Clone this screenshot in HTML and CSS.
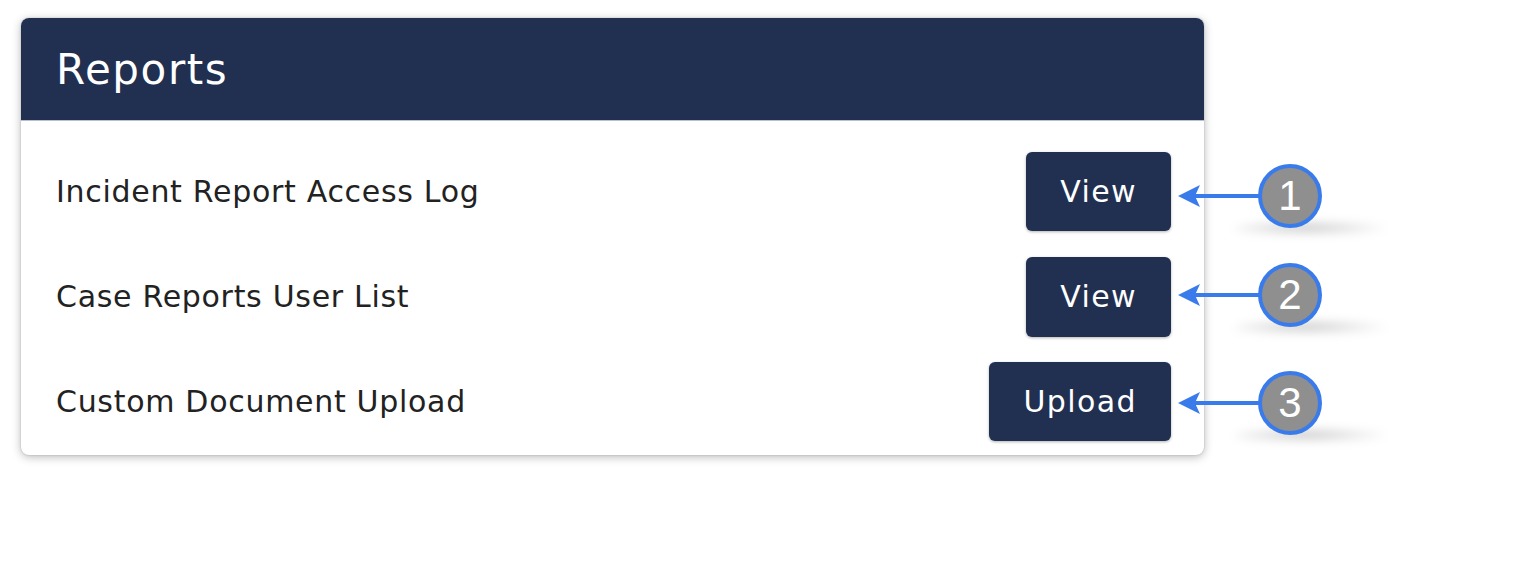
FILE: index.html
```html
<!DOCTYPE html>
<html>
<head>
<meta charset="utf-8">
<link rel="stylesheet" href="styles.css">
</head>
<body>
<div class="stage">
  <div class="card">
    <div class="card-head"><h1 class="title">Reports</h1></div>
    <div class="card-body">
      <div class="row"><span class="label">Incident Report Access Log</span><button class="btn">View</button></div>
      <div class="row"><span class="label">Case Reports User List</span><button class="btn">View</button></div>
      <div class="row"><span class="label">Custom Document Upload</span><button class="btn">Upload</button></div>
    </div>
  </div>

  <div class="callout c1">
    <svg class="arrow" width="84" height="26" viewBox="0 0 84 26"><path d="M0 13 L22 2 L17 13 L22 24 Z" fill="#3a7bec"/><rect x="14" y="11" width="70" height="4" fill="#3a7bec"/></svg>
    <div class="shadow"></div>
    <div class="badge">1</div>
  </div>
  <div class="callout c2">
    <svg class="arrow" width="84" height="26" viewBox="0 0 84 26"><path d="M0 13 L22 2 L17 13 L22 24 Z" fill="#3a7bec"/><rect x="14" y="11" width="70" height="4" fill="#3a7bec"/></svg>
    <div class="shadow"></div>
    <div class="badge">2</div>
  </div>
  <div class="callout c3">
    <svg class="arrow" width="84" height="26" viewBox="0 0 84 26"><path d="M0 13 L22 2 L17 13 L22 24 Z" fill="#3a7bec"/><rect x="14" y="11" width="70" height="4" fill="#3a7bec"/></svg>
    <div class="shadow"></div>
    <div class="badge">3</div>
  </div>
</div>
</body>
</html>
```

FILE: styles.css
```css
html, body {
  margin: 0;
  padding: 0;
  background: #ffffff;
}
.stage {
  position: relative;
  width: 1536px;
  height: 570px;
  padding: 18px 0 0 21px;
  box-sizing: border-box;
  font-family: "DejaVu Sans", "Noto Sans", sans-serif;
}
.card {
  width: 1183px;
  height: 437px;
  border-radius: 8px;
  background: #fff;
  box-shadow: 0 2px 10px rgba(0,0,0,0.28), 0 0 2px rgba(0,0,0,0.2);
  overflow: hidden;
  display: flex;
  flex-direction: column;
}
.card-head {
  height: 103px;
  background: #213051;
  display: flex;
  align-items: center;
  padding-left: 35px;
  border-bottom: 1px solid #b9bfcc;
  box-sizing: border-box;
}
.title {
  margin: 0;
  color: #fff;
  font-weight: 400;
  font-size: 42px;
  letter-spacing: 1.6px;
}
.card-body {
  display: flex;
  flex-direction: column;
  gap: 26px;
  padding: 31px 33px 13px 35px;
}
.row {
  display: flex;
  align-items: center;
  justify-content: space-between;
  height: 79px;
}
.label {
  font-size: 30px;
  color: #222;
  letter-spacing: 0.7px;
}
.btn {
  height: 79px;
  padding: 0 34px;
  border: none;
  border-radius: 6px;
  background: #213051;
  color: #fff;
  font-family: inherit;
  font-size: 30px;
  letter-spacing: 1.4px;
  box-shadow: 0 1px 3px rgba(0,0,0,0.3);
}
.row:nth-child(2) .btn { height: 80px; }
.callout {
  position: absolute;
  left: 1178px;
  width: 220px;
  height: 80px;
}
.c1 { top: 164px; }
.c2 { top: 263px; }
.c3 { top: 371px; }
.arrow {
  position: absolute;
  left: 0;
  top: 19px;
}
.badge {
  position: absolute;
  left: 80px;
  top: 0;
  width: 56px;
  height: 56px;
  border: 4px solid #3a7bec;
  border-radius: 50%;
  background: #8f8f8f;
  color: #fff;
  font-family: "Liberation Sans", Arial, sans-serif;
  font-size: 42px;
  line-height: 56px;
  text-align: center;
}
.shadow {
  position: absolute;
  left: 55px;
  top: 58px;
  width: 160px;
  height: 14px;
  border-radius: 50%;
  background: radial-gradient(ellipse at 45% 40%, rgba(0,0,0,0.22), rgba(0,0,0,0) 70%);
  filter: blur(5px);
}
```
